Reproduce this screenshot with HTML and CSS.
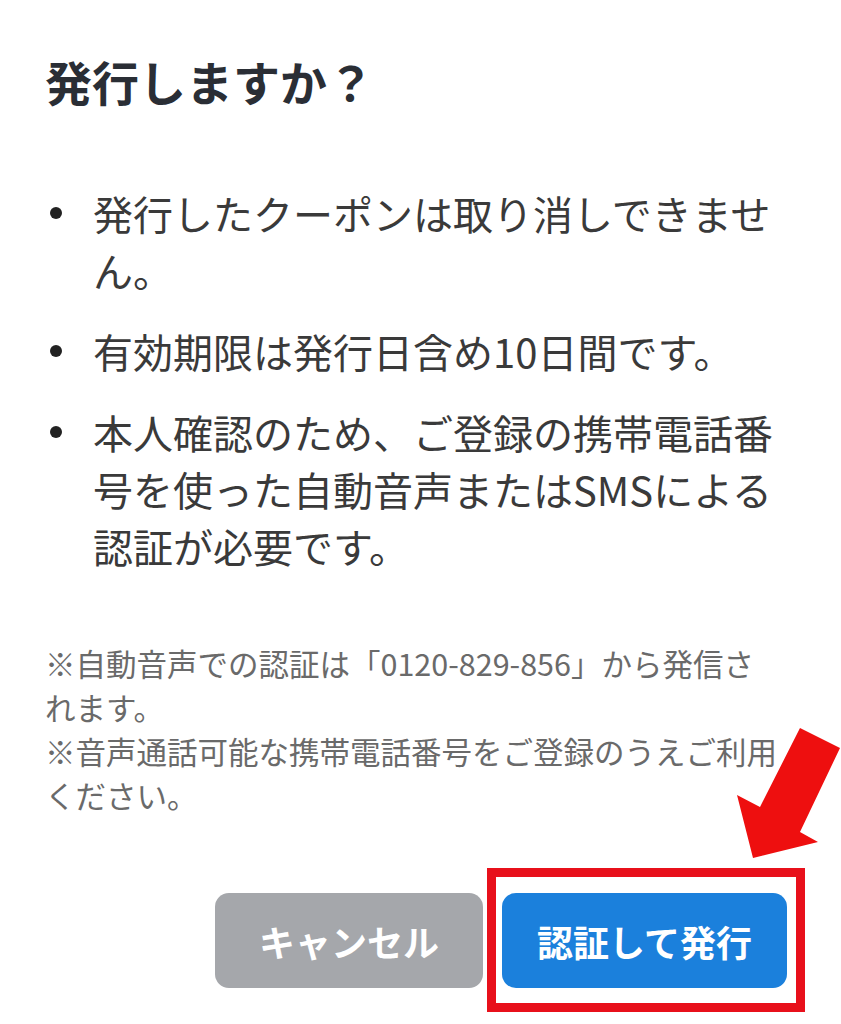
FILE: index.html
```html
<!DOCTYPE html>
<html lang="ja">
<head>
    <meta charset="UTF-8">
    <meta name="viewport" content="width=device-width, initial-scale=1.0">
    <title>クーポン発行</title>
    <link rel="stylesheet" href="styles.css">
</head>
<body>

    <div class="dialog">
        <h1 class="dialog-title">発行しますか？</h1>

        <ul class="notice-list">
            <li><span>発行したクーポンは取り消しできません。</span></li>
            <li><span>有効期限は発行日含め10日間です。</span></li>
            <li><span>本人確認のため、ご登録の携帯電話番号を使った自動音声またはSMSによる認証が必要です。</span></li>
        </ul>

        <p class="note">※自動音声での認証は「0120-829-856」から発信されます。<br>※音声通話可能な携帯電話番号をご登録のうえご利用ください。</p>

        <div class="actions">
            <button type="button" class="btn btn-cancel">キャンセル</button>
            <span class="confirm-wrap">
                <button type="button" class="btn btn-confirm">認証して発行</button>
                <span class="highlight-box"></span>
            </span>
        </div>
    </div>

    <!-- annotation arrow -->
    <svg class="arrow" width="111" height="145" viewBox="0 0 111 145">
        <polygon points="70,8 110,28 70,112 88,122 23,138 7,75 30,87" fill="#ee0f0f"/>
    </svg>

</body>
</html>
```

FILE: styles.css
```css
/* Global Styles */
body {
    font-family: "Noto Sans CJK JP", sans-serif;
    background: #ffffff;
    color: #3a3a3a;
    margin: 0;
    padding: 0;
    position: relative;
    width: 841px;
    height: 1024px;
    overflow: hidden;
}

.dialog {
    padding: 49px 45px 0 45px;
}

.dialog-title {
    margin: 0;
    font-size: 47px;
    line-height: 64px;
    font-weight: bold;
    color: #2a2e35;
}

.notice-list {
    list-style: none;
    margin: 72px 0 0 0;
    padding: 0 13px 0 0;
}

.notice-list li {
    display: flex;
    align-items: flex-start;
    font-size: 40px;
    line-height: 57px;
    margin-bottom: 24px;
}

.notice-list li:last-child {
    margin-bottom: 0;
}

.notice-list li::before {
    content: "";
    flex-shrink: 0;
    width: 12px;
    height: 12px;
    border-radius: 50%;
    background: #222222;
    margin: 22px 31px 0 5px;
}

.note {
    margin: 66px 0 0 0;
    padding-right: 15px;
    font-size: 30.5px;
    line-height: 44px;
    color: #6a6a6a;
}

.actions {
    display: flex;
    justify-content: flex-end;
    gap: 19px;
    margin-top: 76px;
    padding-right: 9px;
}

.btn {
    font-family: "Noto Sans CJK JP", sans-serif;
    font-size: 36px;
    font-weight: bold;
    color: #ffffff;
    border: none;
    border-radius: 14px;
    height: 95px;
    padding: 0;
    cursor: pointer;
}

.btn-cancel {
    width: 268px;
    background: #a5a7ab;
}

.btn-confirm {
    width: 285px;
    background: #1b80dc;
}

.confirm-wrap {
    position: relative;
    display: flex;
}

.highlight-box {
    position: absolute;
    top: -25px;
    left: -15px;
    right: -18px;
    bottom: -24px;
    border: 9px solid #e8101b;
}

.arrow {
    position: absolute;
    left: 730px;
    top: 720px;
}
```
